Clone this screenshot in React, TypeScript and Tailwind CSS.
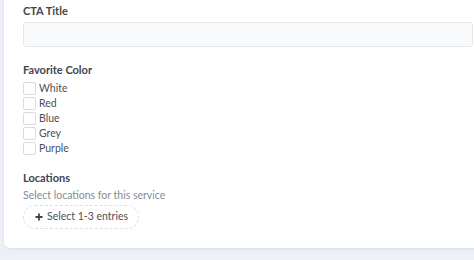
import React from 'react'

const colors = ['White', 'Red', 'Blue', 'Grey', 'Purple']

export default function App() {
  return (
    <div
      className="h-[260px] w-[474px] overflow-hidden bg-[#edf1f7] pl-[4px]"
      style={{ fontFamily: 'Lato, "Open Sans", sans-serif' }}
    >
      <div className="h-[248px] w-[480px] rounded-b-[6px] bg-white pl-[19px] pr-[10px] pt-[4px] shadow-[0_1px_3px_rgba(100,116,139,0.15)]">
        <label className="block text-[11px] font-bold leading-[14px] text-[#3f4550]">CTA Title</label>
        <input
          type="text"
          className="mt-[4px] block h-[25px] w-[450px] rounded-[3px] border border-[#e3e6eb] bg-[#f9fafb] px-2 text-[11px] outline-none"
        />

        <div className="mt-[16px]">
          <div className="text-[11px] font-bold leading-[14px] text-[#3f4550]">Favorite Color</div>
          <div className="mt-[4px] flex flex-col">
            {colors.map(c => (
              <label key={c} className="flex h-[15px] items-center gap-[3px]">
                <span className="block h-[13px] w-[13px] rounded-[2px] border border-[#d8dce2] bg-white" />
                <span className="text-[10.5px] leading-[15px] text-[#4a505b]">{c}</span>
              </label>
            ))}
          </div>
        </div>

        <div className="mt-[15px]">
          <div className="text-[11px] font-bold leading-[14px] text-[#3f4550]">Locations</div>
          <div className="mt-[3px] text-[10.5px] leading-[14px] text-[#858b95]">Select locations for this service</div>
          <button
            type="button"
            className="mt-[3px] flex h-[24px] items-center gap-[4px] rounded-full border border-dashed border-[#dcdfe4] bg-white pl-[11px] pr-[10px] text-[10.5px] text-[#4a505b]"
          >
            <svg width="8" height="8" viewBox="0 0 8 8" className="text-[#3f4550]">
              <path d="M4 0.5v7M0.5 4h7" stroke="currentColor" strokeWidth="1.8" />
            </svg>
            Select 1-3 entries
          </button>
        </div>
      </div>
    </div>
  )
}
